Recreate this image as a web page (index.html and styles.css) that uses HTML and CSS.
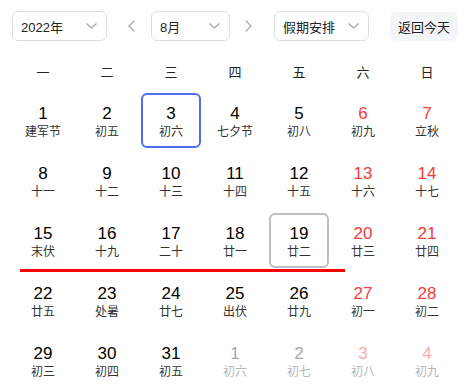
FILE: index.html
```html
<!DOCTYPE html>
<html lang="zh-CN">
<head>
    <meta charset="UTF-8">
    <meta name="viewport" content="width=device-width, initial-scale=1.0">
    <title>万年历</title>
    <link rel="stylesheet" href="styles.css">
</head>
<body>
    <div class="calendar">
        <div class="toolbar">
            <div class="select year-select">
                <span>2022年</span>
                <svg class="chevron" width="11" height="6" viewBox="0 0 11 6"><path d="M0.5 0.5 L5.5 5 L10.5 0.5" /></svg>
            </div>
            <button class="arrow arrow-prev">
                <svg width="8" height="14" viewBox="0 0 8 14"><path d="M7 1 L1 7 L7 13" /></svg>
            </button>
            <div class="select month-select">
                <span>8月</span>
                <svg class="chevron" width="11" height="6" viewBox="0 0 11 6"><path d="M0.5 0.5 L5.5 5 L10.5 0.5" /></svg>
            </div>
            <button class="arrow arrow-next">
                <svg width="8" height="14" viewBox="0 0 8 14"><path d="M1 1 L7 7 L1 13" /></svg>
            </button>
            <div class="select holiday-select">
                <span>假期安排</span>
                <svg class="chevron" width="11" height="6" viewBox="0 0 11 6"><path d="M0.5 0.5 L5.5 5 L10.5 0.5" /></svg>
            </div>
            <button class="today-btn">返回今天</button>
        </div>

        <div class="weekdays">
            <div>一</div>
            <div>二</div>
            <div>三</div>
            <div>四</div>
            <div>五</div>
            <div>六</div>
            <div>日</div>
        </div>

        <div class="days">
            <div class="day"><span class="num">1</span><span class="lunar">建军节</span></div>
            <div class="day"><span class="num">2</span><span class="lunar">初五</span></div>
            <div class="day selected"><span class="num">3</span><span class="lunar">初六</span></div>
            <div class="day"><span class="num">4</span><span class="lunar">七夕节</span></div>
            <div class="day"><span class="num">5</span><span class="lunar">初八</span></div>
            <div class="day weekend"><span class="num">6</span><span class="lunar">初九</span></div>
            <div class="day weekend"><span class="num">7</span><span class="lunar">立秋</span></div>

            <div class="day"><span class="num">8</span><span class="lunar">十一</span></div>
            <div class="day"><span class="num">9</span><span class="lunar">十二</span></div>
            <div class="day"><span class="num">10</span><span class="lunar">十三</span></div>
            <div class="day"><span class="num">11</span><span class="lunar">十四</span></div>
            <div class="day"><span class="num">12</span><span class="lunar">十五</span></div>
            <div class="day weekend"><span class="num">13</span><span class="lunar">十六</span></div>
            <div class="day weekend"><span class="num">14</span><span class="lunar">十七</span></div>

            <div class="day"><span class="num">15</span><span class="lunar">末伏</span></div>
            <div class="day"><span class="num">16</span><span class="lunar">十九</span></div>
            <div class="day"><span class="num">17</span><span class="lunar">二十</span></div>
            <div class="day"><span class="num">18</span><span class="lunar">廿一</span></div>
            <div class="day today"><span class="num">19</span><span class="lunar">廿二</span></div>
            <div class="day weekend"><span class="num">20</span><span class="lunar">廿三</span></div>
            <div class="day weekend"><span class="num">21</span><span class="lunar">廿四</span></div>

            <div class="day"><span class="num">22</span><span class="lunar">廿五</span></div>
            <div class="day"><span class="num">23</span><span class="lunar">处暑</span></div>
            <div class="day"><span class="num">24</span><span class="lunar">廿七</span></div>
            <div class="day"><span class="num">25</span><span class="lunar">出伏</span></div>
            <div class="day"><span class="num">26</span><span class="lunar">廿九</span></div>
            <div class="day weekend"><span class="num">27</span><span class="lunar">初一</span></div>
            <div class="day weekend"><span class="num">28</span><span class="lunar">初二</span></div>

            <div class="day"><span class="num">29</span><span class="lunar">初三</span></div>
            <div class="day"><span class="num">30</span><span class="lunar">初四</span></div>
            <div class="day"><span class="num">31</span><span class="lunar">初五</span></div>
            <div class="day other"><span class="num">1</span><span class="lunar">初六</span></div>
            <div class="day other"><span class="num">2</span><span class="lunar">初七</span></div>
            <div class="day other weekend"><span class="num">3</span><span class="lunar">初八</span></div>
            <div class="day other weekend"><span class="num">4</span><span class="lunar">初九</span></div>

            <!-- annotation under the 15th-19th -->
            <div class="mark-line"></div>
        </div>
    </div>
</body>
</html>
```

FILE: styles.css
```css
body {
    margin: 0;
    background: #fff;
    font-family: "Liberation Sans", "Noto Sans CJK SC", sans-serif;
    color: #000;
}
.calendar {
    width: 470px;
    padding-top: 11px;
}
.toolbar {
    display: flex;
    align-items: center;
    padding-left: 12px;
    height: 30px;
}
.select {
    box-sizing: border-box;
    height: 30px;
    display: flex;
    align-items: center;
    justify-content: space-between;
    padding: 0 9px 0 8px;
    border: 1px solid #dcdee3;
    border-radius: 6px;
    font-size: 13px;
    color: #222;
}
.year-select {
    width: 95px;
}
.month-select {
    width: 79px;
}
.holiday-select {
    width: 95px;
}
.chevron path {
    fill: none;
    stroke: #a3a6ad;
    stroke-width: 1.3;
}
.arrow {
    background: none;
    border: none;
    padding: 0;
    width: 7px;
    height: 14px;
    display: flex;
    align-items: center;
    justify-content: center;
    cursor: pointer;
}
.arrow path {
    fill: none;
    stroke: #a0a3aa;
    stroke-width: 1.3;
}
.arrow-prev {
    margin: 0 16px 0 21px;
}
.arrow-next {
    margin: 0 22px 0 15px;
}
.today-btn {
    margin-left: 21px;
    width: 68px;
    height: 29px;
    border: none;
    border-radius: 6px;
    background: #f4f5f6;
    font-family: "Liberation Sans", "Noto Sans CJK SC", sans-serif;
    font-size: 13px;
    color: #222;
    padding: 0;
    cursor: pointer;
}
.weekdays {
    display: grid;
    grid-template-columns: repeat(7, 1fr);
    padding: 0 11px;
    margin-top: 12px;
    height: 40px;
    line-height: 40px;
    text-align: center;
    font-size: 13px;
    color: #222;
}
.days {
    position: relative;
    display: grid;
    grid-template-columns: repeat(7, 1fr);
    row-gap: 5px;
    padding: 0 11px;
}
.day {
    box-sizing: border-box;
    height: 55px;
    margin: 0 2px;
    padding-top: 9px;
    border: 2px solid transparent;
    border-radius: 6px;
    display: flex;
    flex-direction: column;
    align-items: center;
}
.num {
    font-size: 17px;
    line-height: 20px;
    color: #000;
}
.lunar {
    font-size: 12px;
    line-height: 16px;
    color: #333;
}
.weekend .num {
    color: #f73b3b;
}
.selected {
    border-color: #4e6ef2;
}
.today {
    border-color: #bdbfc6;
}
.other .num {
    color: #a8a8a8;
}
.other .lunar {
    color: #b5b5b5;
}
.other.weekend .num {
    color: #fbaaaa;
}
.mark-line {
    position: absolute;
    left: 20px;
    top: 176px;
    width: 325px;
    height: 3px;
    background: #f00;
}
```
